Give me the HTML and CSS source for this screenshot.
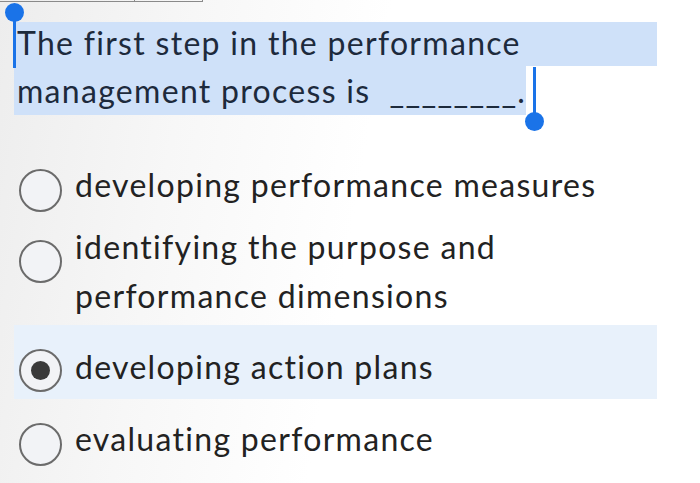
FILE: index.html
```html
<!DOCTYPE html>
<html lang="en">
<head>
    <meta charset="UTF-8">
    <title>Question</title>
    <link rel="stylesheet" href="styles.css">
</head>
<body>

    <div class="top-tabs">
        <span class="tab tab-wide"></span>
        <span class="tab"></span>
    </div>

    <div class="question">
        <span class="q-line q-first">The first step in the performance</span>
        <span class="q-line q-second">management process is &nbsp;________.</span>
        <!-- selection handles -->
        <span class="handle handle-start"></span>
        <span class="handle handle-end"></span>
    </div>

    <div class="options">
        <label class="option opt-1">
            <span class="radio"></span>
            <span class="option-text">developing performance measures</span>
        </label>
        <label class="option opt-2">
            <span class="radio"></span>
            <span class="option-text">identifying the purpose and performance dimensions</span>
        </label>
        <label class="option opt-3 selected">
            <span class="radio"></span>
            <span class="option-text">developing action plans</span>
        </label>
        <label class="option opt-4">
            <span class="radio"></span>
            <span class="option-text">evaluating performance</span>
        </label>
    </div>

</body>
</html>
```

FILE: styles.css
```css
body {
    font-family: Lato, "Noto Sans", sans-serif;
    font-size: 32px;
    letter-spacing: 1.3px;
    font-variant-ligatures: none;
    margin: 0;
    padding: 0;
    background: linear-gradient(100deg, #ededed 0%, #f7f7f7 25%, #ffffff 50%);
    min-height: 483px;
}

/* Barra de arriba */
.top-tabs {
    display: flex;
    width: 203px;
    height: 2px;
}

.tab {
    flex: 1;
    border: 1px solid #8a8a8a;
    border-top: none;
    border-left: none;
}

.tab-wide {
    flex: 0 0 134px;
}

/* Pregunta */
.question {
    position: relative;
    margin: 20px 0 0 14px;
    width: 643px;
    color: #1d2a3c;
}

.q-line {
    background: #cfe1f9;
    padding-left: 3px;
    white-space: nowrap;
}

.q-first {
    display: block;
    height: 44px;
    line-height: 42px;
}

.q-second {
    display: inline-block;
    height: 49px;
    line-height: 49px;
    padding-right: 0;
}

.handle {
    position: absolute;
    width: 3px;
    background: #1a73e8;
}

.handle::after {
    content: "";
    position: absolute;
    left: -8px;
    width: 19px;
    height: 19px;
    border-radius: 50%;
    background: #1a73e8;
}

.handle-start {
    left: -1px;
    top: -10px;
    height: 56px;
}

.handle-start::after {
    top: -9px;
}

.handle-end {
    left: 519px;
    top: 45px;
    height: 54px;
}

.handle-end::after {
    bottom: -10px;
}

/* Opciones */
.options {
    margin: 41px 0 0 14px;
    width: 643px;
}

.option {
    display: flex;
    align-items: flex-start;
    color: #222;
    line-height: 49px;
}

.option-text {
    width: 450px;
    margin-left: 13px;
}

.radio {
    flex: 0 0 auto;
    width: 39px;
    height: 39px;
    margin-left: 5px;
    border: 2px solid #6b6b6b;
    border-radius: 50%;
    background: #f2f3f6;
    position: relative;
}

.opt-1 {
    padding: 4px 0 10px;
}

.opt-1 .radio {
    margin-top: 9px;
}

.opt-1 .option-text {
    width: 570px;
}

.opt-2 .radio {
    margin-top: 18px;
}

.opt-3 {
    margin-top: 5px;
    padding: 17px 0 7px;
    background: #e8f1fb;
}

.opt-3 .radio {
    margin-top: 7px;
}

.opt-4 {
    padding: 15px 0 0;
}

.opt-4 .radio {
    margin-top: 9px;
}

.option.selected .radio::after {
    content: "";
    position: absolute;
    top: 10px;
    left: 10px;
    width: 19px;
    height: 19px;
    border-radius: 50%;
    background: #3a3a3a;
}
```
